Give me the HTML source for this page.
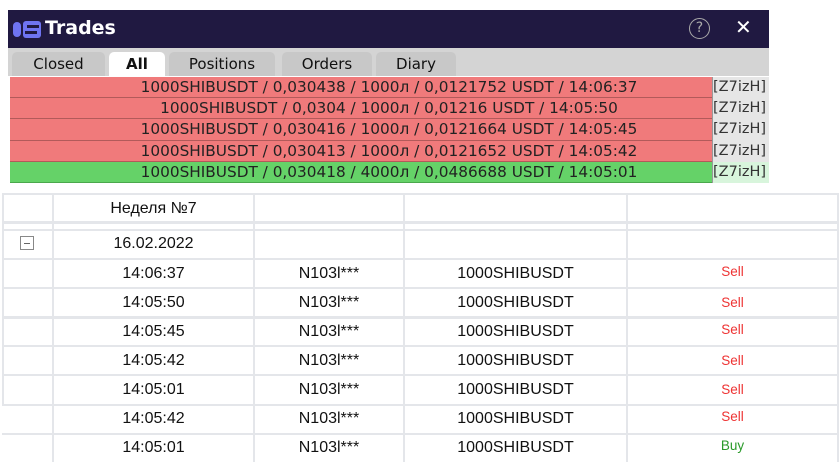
<html><head><style>
body{margin:0;width:840px;height:462px;background:#fff;position:relative;overflow:hidden;font-family:"DejaVu Sans","Liberation Sans",sans-serif}
.hdr{position:absolute;left:8px;top:10px;width:761px;height:38px;background:#201941}
.tabs{position:absolute;left:8px;top:48px;width:761px;height:28px;background:#d4d4d4}
.tab{position:absolute;top:4px;height:24px;background:#c8c8c8;border-radius:5px 5px 0 0;font-size:15px;line-height:25px;text-align:center;color:#111}
.row{position:absolute;left:10px;width:758px;height:20px;font-size:15.3px;line-height:21px;text-align:center;color:#222;border-bottom:1px solid #b25a5a;white-space:nowrap}
.z{position:absolute;left:712px;width:56px;height:21px;background:#e6e6e6;font-size:14.5px;line-height:21px;color:#333;border-left:1px solid #999;white-space:nowrap;overflow:hidden}
.t{position:absolute;font-family:"Liberation Sans Narrow","Liberation Sans",sans-serif;font-size:16px;color:#111;text-align:center}
.s{font-size:13.5px!important}
.hl{position:absolute;height:2px;background:#e4e6ea}
.vl{position:absolute;width:2px;background:#e4e6ea}
</style></head><body>
<div class="hdr">
<svg style="position:absolute;left:5px;top:11px" width="28" height="17"><rect x="0" y="1" width="8" height="15" rx="4" fill="#6f74f2"/><rect x="10" y="0" width="18" height="17" rx="3" fill="#6f74f2"/><rect x="14" y="4" width="12" height="3" fill="#201941"/><rect x="12" y="10" width="12" height="3" fill="#201941"/></svg>
<div style="position:absolute;left:37px;top:7px;color:#fff;font-size:19px;font-weight:bold">Trades</div>
<div style="position:absolute;left:681px;top:8px;width:19px;height:19px;border:1.5px solid #aaa;border-radius:50%;color:#aaa;font-size:14px;text-align:center;line-height:19px">?</div>
<div style="position:absolute;left:727px;top:5px;color:#fff;font-size:20px;font-weight:bold">✕</div>
</div>
<div class="tabs">
<div class="tab" style="left:4px;width:93px">Closed</div>
<div class="tab" style="left:101px;width:56px;background:#fff;font-weight:bold">All</div>
<div class="tab" style="left:161px;width:106px">Positions</div>
<div class="tab" style="left:274px;width:90px">Orders</div>
<div class="tab" style="left:368px;width:80px">Diary</div>
</div>
<div class="row" style="top:77px;background:#f07a7b">1000SHIBUSDT / 0,030438 / 1000л / 0,0121752 USDT / 14:06:37</div>
<div class="row" style="top:98px;background:#f07a7b">1000SHIBUSDT / 0,0304 / 1000л / 0,01216 USDT / 14:05:50</div>
<div class="row" style="top:119px;background:#f07a7b;height:21px">1000SHIBUSDT / 0,030416 / 1000л / 0,0121664 USDT / 14:05:45</div>
<div class="row" style="top:141px;background:#f07a7b">1000SHIBUSDT / 0,030413 / 1000л / 0,0121652 USDT / 14:05:42</div>
<div class="row" style="top:162px;background:#65d268;border-bottom-color:#4aa84c">1000SHIBUSDT / 0,030418 / 4000л / 0,0486688 USDT / 14:05:01</div>
<div class="z" style="top:77px">[Z7izH]</div><div class="z" style="top:98px">[Z7izH]</div><div class="z" style="top:119px;height:22px">[Z7izH]</div><div class="z" style="top:141px">[Z7izH]</div><div class="z" style="top:162px;background:#d8f5dc">[Z7izH]</div>

<div class="hl" style="left:2px;width:836px;top:193px"></div>
<div class="hl" style="left:2px;width:836px;top:221px;height:3px"></div>
<div class="hl" style="left:2px;width:836px;top:229px"></div>
<div class="hl" style="left:2px;width:836px;top:258px"></div>
<div class="hl" style="left:2px;width:836px;top:287px"></div>
<div class="hl" style="left:2px;width:836px;top:316px;height:3px"></div>
<div class="hl" style="left:2px;width:836px;top:345px"></div>
<div class="hl" style="left:2px;width:836px;top:374px"></div>
<div class="hl" style="left:2px;width:836px;top:404px"></div>
<div class="hl" style="left:2px;width:836px;top:433px"></div>
<div class="vl" style="left:2px;top:193px;height:212px"></div>
<div class="vl" style="left:837px;top:193px;height:269px"></div>
<div class="vl" style="left:52px;top:193px;height:269px"></div>
<div class="vl" style="left:253px;top:193px;height:269px"></div>
<div class="vl" style="left:403px;top:193px;height:269px"></div>
<div class="vl" style="left:626px;top:193px;height:269px"></div>
<div style="position:absolute;left:20px;top:236px;width:14px;height:14px;border:1px solid #888;box-sizing:border-box"><div style="position:absolute;left:3px;top:6px;width:6px;height:1px;background:#666"></div></div>

<div class="t" style="left:54px;width:199px;top:200px">Неделя №7</div>
<div class="t" style="left:54px;width:199px;top:235px">16.02.2022</div>

<div class="t" style="left:54px;width:199px;top:265px">14:06:37</div><div class="t" style="left:255px;width:148px;top:265px">N103l***</div><div class="t" style="left:405px;width:221px;top:265px">1000SHIBUSDT</div><div class="t s" style="left:628px;width:209px;top:264px;color:#e33">Sell</div>
<div class="t" style="left:54px;width:199px;top:294px">14:05:50</div><div class="t" style="left:255px;width:148px;top:294px">N103l***</div><div class="t" style="left:405px;width:221px;top:294px">1000SHIBUSDT</div><div class="t s" style="left:628px;width:209px;top:295px;color:#e33">Sell</div>
<div class="t" style="left:54px;width:199px;top:323px">14:05:45</div><div class="t" style="left:255px;width:148px;top:323px">N103l***</div><div class="t" style="left:405px;width:221px;top:323px">1000SHIBUSDT</div><div class="t s" style="left:628px;width:209px;top:322px;color:#e33">Sell</div>
<div class="t" style="left:54px;width:199px;top:352px">14:05:42</div><div class="t" style="left:255px;width:148px;top:352px">N103l***</div><div class="t" style="left:405px;width:221px;top:352px">1000SHIBUSDT</div><div class="t s" style="left:628px;width:209px;top:353px;color:#e33">Sell</div>
<div class="t" style="left:54px;width:199px;top:381px">14:05:01</div><div class="t" style="left:255px;width:148px;top:381px">N103l***</div><div class="t" style="left:405px;width:221px;top:381px">1000SHIBUSDT</div><div class="t s" style="left:628px;width:209px;top:382px;color:#e33">Sell</div>
<div class="t" style="left:54px;width:199px;top:410px">14:05:42</div><div class="t" style="left:255px;width:148px;top:410px">N103l***</div><div class="t" style="left:405px;width:221px;top:410px">1000SHIBUSDT</div><div class="t s" style="left:628px;width:209px;top:409px;color:#e33">Sell</div>
<div class="t" style="left:54px;width:199px;top:439px">14:05:01</div><div class="t" style="left:255px;width:148px;top:439px">N103l***</div><div class="t" style="left:405px;width:221px;top:439px">1000SHIBUSDT</div><div class="t s" style="left:628px;width:209px;top:438px;color:#2a9a2a">Buy</div>
</body></html>
